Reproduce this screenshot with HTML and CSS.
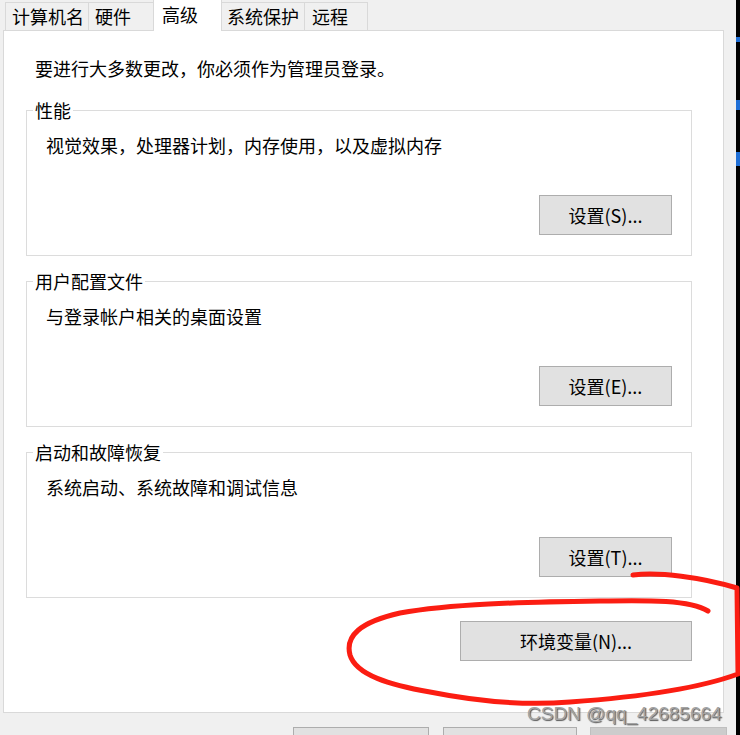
FILE: index.html
```html
<!DOCTYPE html>
<html lang="zh-CN">
<head>
<meta charset="utf-8">
<title>系统属性 - 高级</title>
<link rel="stylesheet" href="styles.css">
</head>
<body>
<div class="screen">
  <div class="window">
    <div class="tabs">
      <div class="tab t1">计算机名</div>
      <div class="tab t2">硬件</div>
      <div class="tab t3 active">高级</div>
      <div class="tab t4">系统保护</div>
      <div class="tab t5 last">远程</div>
    </div>
    <div class="panel">
      <p class="intro">要进行大多数更改，你必须作为管理员登录。</p>
      <fieldset class="group">
        <legend>性能</legend>
        <div class="group-body">
          <p class="desc">视觉效果，处理器计划，内存使用，以及虚拟内存</p>
          <div class="actions"><button class="btn">设置(S)...</button></div>
        </div>
      </fieldset>
      <fieldset class="group">
        <legend>用户配置文件</legend>
        <div class="group-body">
          <p class="desc">与登录帐户相关的桌面设置</p>
          <div class="actions"><button class="btn">设置(E)...</button></div>
        </div>
      </fieldset>
      <fieldset class="group">
        <legend>启动和故障恢复</legend>
        <div class="group-body">
          <p class="desc">系统启动、系统故障和调试信息</p>
          <div class="actions"><button class="btn">设置(T)...</button></div>
        </div>
      </fieldset>
      <div class="env-row"><button class="btn env">环境变量(N)...</button></div>
    </div>
    <div class="footer">
      <button class="btn fbtn f1" aria-label="确定"></button>
      <button class="btn fbtn f2" aria-label="取消"></button>
      <button class="btn fbtn f3 disabled" aria-label="应用"></button>
    </div>
  </div>
  <div class="edge"></div>
  <svg class="mark" width="740" height="735" viewBox="0 0 740 735" aria-hidden="true">
    <path d="M633,575 C660,572 700,577 737,588 L738,674 C700,688 640,697 570,702 C520,706 470,700 430,692 C390,685 356,675 350,655 C345,636 360,622 400,613 C450,604 520,602 600,601 C650,600 690,600 708,611" fill="none" stroke="#fb1d12" stroke-width="5" stroke-linecap="round" stroke-linejoin="round"/>
  </svg>
  <div class="watermark">CSDN @qq_42685664</div>
</div>
</body>
</html>
```

FILE: styles.css
```css
* { box-sizing: border-box; }
html, body { margin: 0; padding: 0; }
body {
  width: 740px;
  height: 735px;
  overflow: hidden;
  background: #f0f0f0;
  font-family: "Noto Sans CJK SC", "Microsoft YaHei", sans-serif;
  font-size: 18px;
  color: #000;
}
.screen {
  position: relative;
  display: flex;
  width: 740px;
  height: 735px;
  overflow: hidden;
}
.window {
  width: 736px;
  height: 735px;
  background: #f0f0f0;
}
.edge {
  width: 4px;
  height: 735px;
  background: linear-gradient(to bottom, #000 0 37px, #1f6fd6 37px 42px, #000 42px 100px, #1f6fd6 100px 110px, #000 110px 152px, #1f6fd6 152px 166px, #000 166px);
}
.tabs {
  display: flex;
  align-items: flex-end;
  height: 30px;
  padding-left: 5px;
}
.tab {
  height: 28px;
  line-height: 26px;
  padding-left: 6px;
  text-align: left;
  background: #f0f0f0;
  border-top: 1px solid #d9d9d9;
  border-left: 1px solid #d9d9d9;
  white-space: nowrap;
}
.tab.last { border-right: 1px solid #d9d9d9; }
.t1 { width: 83px; }
.t2 { width: 65px; }
.t3 { width: 69px; }
.t4 { width: 82px; padding-left: 5px; }
.t5 { width: 64px; padding-left: 7px; }
.tab.active {
  position: relative;
  z-index: 1;
  height: 31px;
  margin-bottom: -1px;
  padding-left: 8px;
  line-height: 29px;
  background: #fff;
  border-top: none;
  border-left: 1px solid #d9d9d9;
  border-right: 1px solid #d9d9d9;
}
.tab.active + .tab { border-left: none; }
.panel {
  margin-left: 3px;
  width: 721px;
  height: 683px;
  background: #fff;
  border: 1px solid #d9d9d9;
  padding: 25px 31px 0 22px;
}
.intro {
  margin: 0 0 20px;
  padding-left: 9px;
  line-height: 24px;
}
.group {
  margin: 0 0 15px;
  padding: 0;
  min-width: 0;
  border: 1px solid #dcdcdc;
}
.group legend {
  margin-left: 6px;
  padding: 0 2px;
  line-height: 20px;
}
.group-body {
  padding: 13px 19px 20px 19px;
}
.desc {
  margin: 0 0 38px;
  line-height: 24px;
}
.actions {
  display: flex;
  justify-content: flex-end;
}
.btn {
  font-family: "Noto Sans CJK SC", "Microsoft YaHei", sans-serif;
  font-size: 18px;
  color: #000;
  background: #e1e1e1;
  border: 1px solid #adadad;
  padding: 0;
  margin: 0;
  height: 40px;
  line-height: 36px;
  text-align: center;
  border-radius: 0;
}
.actions .btn { width: 133px; }
.env-row {
  display: flex;
  justify-content: flex-end;
  padding-top: 8px;
}
.btn.env { width: 232px; }
.footer {
  display: flex;
  gap: 14px;
  padding-left: 293px;
  margin-top: 14px;
}
.fbtn { width: 136px; height: 40px; }
.f2 { width: 134px; }
.f3 { width: 137px; margin-left: -1px; }
.fbtn.disabled { background: #cccccc; border-color: #bfbfbf; }
.mark {
  position: absolute;
  left: 0;
  top: 0;
  pointer-events: none;
}
.watermark {
  position: absolute;
  left: 527px;
  top: 702px;
  font-family: "Liberation Sans", Arial, sans-serif;
  font-size: 19px;
  line-height: 24px;
  color: #a3a3a3;
  text-shadow: 1px 1px 1px #555;
  white-space: nowrap;
}
```
